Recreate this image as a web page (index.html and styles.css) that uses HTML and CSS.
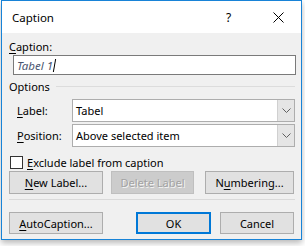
FILE: index.html
```html
<!DOCTYPE html>
<html>
<head>
<meta charset="utf-8">
<link rel="stylesheet" href="styles.css">
</head>
<body>
<div class="window">
  <div class="titlebar">
    <span class="title">Caption</span>
    <span class="help">?</span>
    <span class="close">
      <svg width="11" height="11" viewBox="0 0 11 11"><path d="M0.5 0.5 L10.5 10.5 M10.5 0.5 L0.5 10.5" stroke="#000" stroke-width="1" fill="none"/></svg>
    </span>
  </div>
  <div class="content">
    <div class="cap-label"><u>C</u>aption:</div>
    <div class="textbox"><span class="val">Tabel 1</span><span class="caret"></span></div>
    <div class="group-head"><span>Options</span><span class="gline"></span></div>
    <div class="field-row">
      <span class="flabel"><u>L</u>abel:</span>
      <div class="combo"><span class="ctext">Tabel</span><span class="dd"><svg width="9" height="5" viewBox="0 0 9 5"><path d="M0.5 0.5 L4.5 4.5 L8.5 0.5" stroke="#606060" fill="none"/></svg></span></div>
    </div>
    <div class="field-row second">
      <span class="flabel"><u>P</u>osition:</span>
      <div class="combo"><span class="ctext">Above selected item</span><span class="dd"><svg width="9" height="5" viewBox="0 0 9 5"><path d="M0.5 0.5 L4.5 4.5 L8.5 0.5" stroke="#606060" fill="none"/></svg></span></div>
    </div>
    <div class="check-row"><span class="checkbox"></span><span><u>E</u>xclude label from caption</span></div>
    <div class="btn-row">
      <span class="btn b-new"><u>N</u>ew Label...</span>
      <span class="btn b-del disabled">Delete Label</span>
      <span class="btn b-num">N<u>u</u>mbering...</span>
    </div>
    <div class="sep"></div>
    <div class="btn-row bottom">
      <span class="btn b-auto"><u>A</u>utoCaption...</span>
      <span class="btn b-ok default">OK</span>
      <span class="btn b-cancel">Cancel</span>
    </div>
  </div>
</div>
</body>
</html>
```
FILE: styles.css
```css
html, body {
  margin: 0;
  padding: 0;
  background: #ffffff;
}
body {
  font-family: "Noto Sans", "Open Sans", sans-serif;
  font-size: 11px;
  color: #000;
  width: 305px;
  height: 246px;
  overflow: hidden;
}
u { text-decoration: underline; text-underline-offset: 2px; }
.window {
  margin-left: 1px;
  width: 299px;
  height: 238px;
  border: 1px solid #1883d7;
  background: #f0f0f0;
  box-shadow: 0 3px 6px rgba(0,0,0,0.28);
  display: flex;
  flex-direction: column;
}
.titlebar {
  height: 32px;
  flex: none;
  background: #ffffff;
  display: flex;
  align-items: center;
}
.title {
  margin-left: 10px;
  margin-top: 0;
  font-size: 11.5px;
  flex: 1;
}
.help {
  width: 10px;
  margin-right: 37px;
  font-size: 12px;
}
.close {
  display: flex;
  margin-right: 17px;
}
.content {
  padding: 0 6px 0 7px;
  display: flex;
  flex-direction: column;
}
.cap-label {
  margin-top: 6px;
  line-height: 16px;
  height: 16px;
}
.textbox {
  margin-left: 4px;
  margin-right: -1px;
  height: 18px;
  border: 1px solid #7a7a7a;
  background: #fff;
  display: flex;
  align-items: center;
  padding-left: 3px;
}
.val {
  font-style: italic;
  font-size: 11.5px;
  color: #4a5670;
}
.caret {
  width: 1px;
  height: 13px;
  background: #000;
  margin-left: 1px;
  transform: skewX(-10deg);
}
.group-head {
  margin-top: 3px;
  height: 17px;
  display: flex;
  align-items: center;
}
.gline {
  flex: 1;
  height: 1px;
  background: #dcdcdc;
  margin-left: 6px;
}
.field-row {
  margin-top: 4px;
  display: flex;
  align-items: center;
  height: 23px;
}
.field-row.second { margin-top: 2px; }
.flabel {
  width: 55px;
  margin-left: 8px;
}
.combo {
  flex: 1;
  height: 21px;
  border: 1px solid #adadad;
  background: #fff;
  display: flex;
  align-items: center;
}
.ctext {
  flex: 1;
  padding-left: 3px;
}
.dd {
  width: 16px;
  height: 21px;
  background: #e5e5e5;
  border-left: 1px solid #d0d0d0;
  display: flex;
  align-items: center;
  justify-content: center;
}
.check-row {
  margin-top: 7px;
  display: flex;
  align-items: center;
  height: 16px;
  margin-left: 1px;
}
.checkbox {
  width: 11px;
  height: 11px;
  border: 1px solid #333;
  background: #fff;
  margin-right: 4px;
}
.btn-row {
  margin-top: 1px;
  display: flex;
  height: 23px;
}
.btn {
  box-sizing: border-box;
  height: 23px;
  border: 1px solid #adadad;
  background: #e1e1e1;
  display: flex;
  align-items: center;
  justify-content: center;
}
.b-new { width: 94px; }
.b-del { width: 83px; margin-left: 8px; }
.b-num { width: 89px; margin-left: 11px; }
.disabled {
  background: #cccccc;
  border-color: #bfbfbf;
  color: #a3a3a3;
  text-shadow: 1px 1px 0 #f4f4f4;
}
.sep {
  margin-top: 5px;
  height: 1px;
  background: #dadada;
}
.btn-row.bottom { margin-top: 12px; height: 22px; }
.btn-row.bottom .btn { height: 22px; }
.b-auto { width: 94px; }
.b-ok { width: 75px; margin-left: 33px; }
.default { border: 2px solid #0078d7; }
.b-cancel { width: 74px; margin-left: 9px; }
```
